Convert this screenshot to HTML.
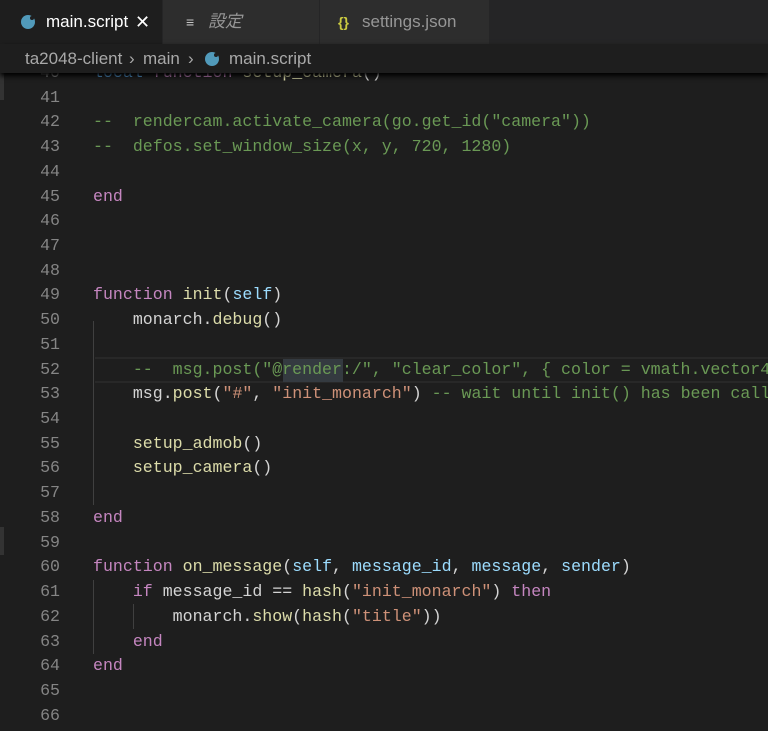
<!DOCTYPE html>
<html><head><meta charset="utf-8"><style>
*{margin:0;padding:0;box-sizing:border-box}
body{width:768px;height:731px;background:#1e1e1e;overflow:hidden;position:relative;font-family:"Liberation Sans","Noto Sans CJK JP",sans-serif}
.tabs{position:absolute;left:0;top:0;width:768px;height:44px;background:#252526}
.tab{position:absolute;top:0;height:44px;background:#2d2d2d;color:#969696;font-size:17px;line-height:44px;border-right:1px solid #252526}
.bc{position:absolute;left:0;top:44px;width:768px;height:29px;background:#1e1e1e;color:#a9a9a9;font-size:17px;line-height:29px;box-shadow:0 3px 5px #000;z-index:3}
.ed{position:absolute;left:0;top:73px;width:768px;height:658px;overflow:hidden;font-family:"Liberation Mono",monospace;font-size:16.6px}
.ln{position:absolute;left:0;width:60px;text-align:right;color:#858585;height:24.7px;line-height:24.7px}
.c{position:absolute;left:93px;white-space:pre;color:#d4d4d4;height:24.7px;line-height:24.7px}
.k{color:#c586c0}.b{color:#569cd6}.f{color:#dcdcaa}.s{color:#ce9178}.m{color:#6a9955}.v{color:#9cdcfe}
.g{position:absolute;width:1px;background:#404040}
.ico{display:inline-block;position:relative;width:14px;height:14px;border-radius:50%;background:#519aba;vertical-align:-2px}
.ico:after{content:"";position:absolute;right:1px;top:1px;width:4px;height:4px;border-radius:50%;background:#1e1e1e}
</style></head><body>
<div class="tabs">
 <div class="tab" style="left:0;width:163px;background:#1e1e1e;color:#fff"><span class="ico" style="position:absolute;left:21px;top:15px"></span><span style="position:absolute;left:46px">main.script</span><span style="position:absolute;left:135px;font-size:18px">✕</span></div>
 <div class="tab" style="left:163px;width:157px"><span style="position:absolute;left:23px;font-size:14px;color:#c5c5c5">≡</span><span style="position:absolute;left:45px;font-style:italic">設定</span></div>
 <div class="tab" style="left:320px;width:170px"><span style="position:absolute;left:18px;color:#cbcb41;font-weight:bold;font-size:14px">{}</span><span style="position:absolute;left:42px">settings.json</span></div>
</div>
<div class="bc"><span style="position:absolute;left:25px">ta2048-client</span><span style="position:absolute;left:129px">›</span><span style="position:absolute;left:143px">main</span><span style="position:absolute;left:188px">›</span><span class="ico" style="position:absolute;left:205px;top:8px"></span><span style="position:absolute;left:229px">main.script</span></div>
<div style="position:absolute;left:0;top:73px;width:4px;height:27px;background:#333"></div>
<div style="position:absolute;left:0;top:527px;width:4px;height:28px;background:#333"></div>
<div class="ed">
<div style="position:absolute;left:95px;top:284px;width:673px;height:26px;border-top:2px solid #282828;border-bottom:2px solid #282828"></div>
<div style="position:absolute;left:283px;top:286px;width:60px;height:23px;background:#343a40"></div>
<div class="g" style="left:93px;top:248px;height:184px"></div>
<div class="g" style="left:93px;top:507px;height:74px"></div>
<div class="g" style="left:133px;top:531px;height:25px"></div>
</div>
<div class="ed" id="e"></div>
<script>
var L={40:'<span class="b">local</span> <span class="k">function</span> <span class="f">setup_camera</span>()',
42:'<span class="m">--  rendercam.activate_camera(go.get_id("camera"))</span>',
43:'<span class="m">--  defos.set_window_size(x, y, 720, 1280)</span>',
45:'<span class="k">end</span>',
49:'<span class="k">function</span> <span class="f">init</span>(<span class="v">self</span>)',
50:'    monarch.<span class="f">debug</span>()',
52:'    <span class="m">--  msg.post("@render:/", "clear_color", { color = vmath.vector4(</span>',
53:'    msg.<span class="f">post</span>(<span class="s">"#"</span>, <span class="s">"init_monarch"</span>) <span class="m">-- wait until init() has been called</span>',
55:'    <span class="f">setup_admob</span>()',
56:'    <span class="f">setup_camera</span>()',
58:'<span class="k">end</span>',
60:'<span class="k">function</span> <span class="f">on_message</span>(<span class="v">self</span>, <span class="v">message_id</span>, <span class="v">message</span>, <span class="v">sender</span>)',
61:'    <span class="k">if</span> message_id == <span class="f">hash</span>(<span class="s">"init_monarch"</span>) <span class="k">then</span>',
62:'        monarch.<span class="f">show</span>(<span class="f">hash</span>(<span class="s">"title"</span>))',
63:'    <span class="k">end</span>',
64:'<span class="k">end</span>'};
var h='';
for(var n=40;n<=67;n++){var t=(98+(n-41)*24.72-12.35-73).toFixed(1);
h+='<div class="ln" style="top:'+t+'px">'+n+'</div>';
if(L[n])h+='<div class="c" style="top:'+t+'px">'+L[n]+'</div>';}
document.getElementById('e').innerHTML=h;
</script>
</body></html>
